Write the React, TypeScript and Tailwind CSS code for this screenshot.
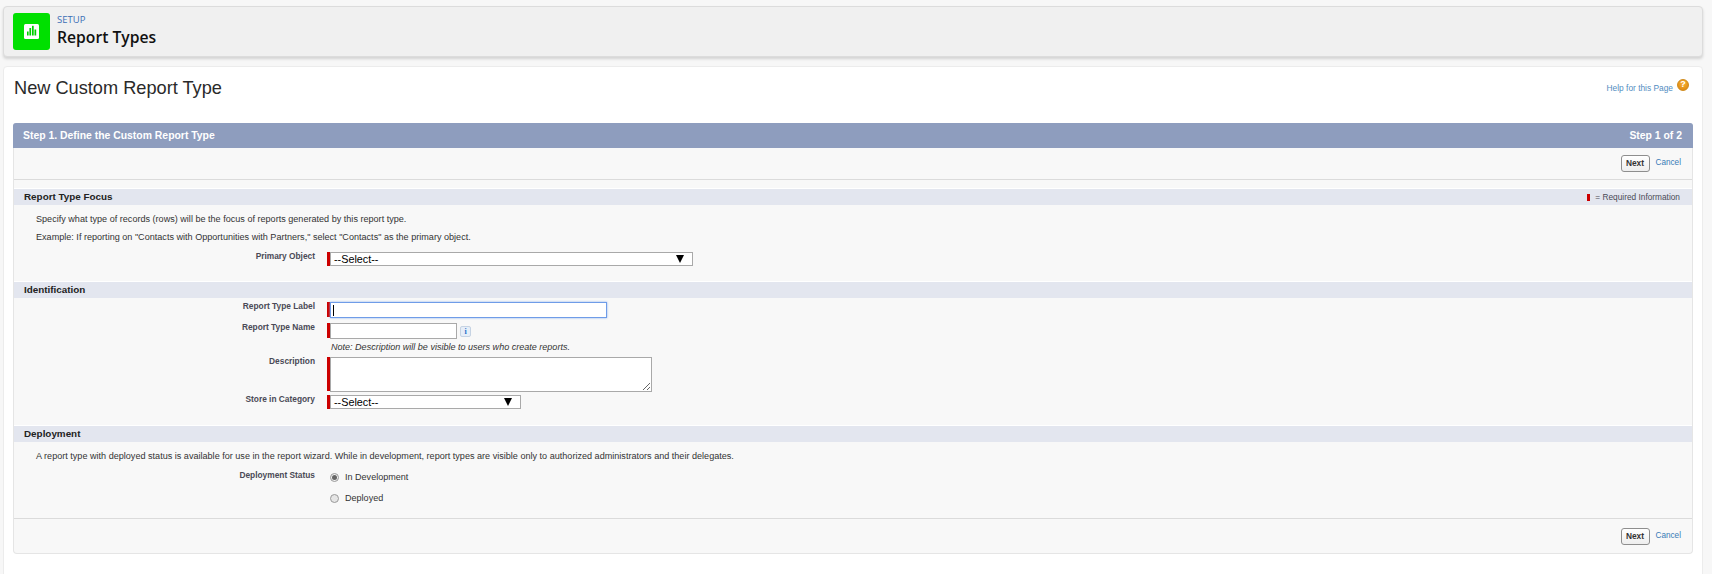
import { ReactNode } from 'react';

function SectionHeader({ title, children }: { title: string; children?: ReactNode }) {
  return (
    <div className="h-[17px] bg-[#e3e6ef] border-t border-white flex items-center justify-between pl-[10px] pr-[12px] text-[#222] text-[9.87px] font-bold">
      <span>{title}</span>
      {children}
    </div>
  );
}

function FieldRow({ label, className, children }: { label: string; className?: string; children: ReactNode }) {
  return (
    <div className={`flex ${className ?? ''}`}>
      <div className="w-[301px] text-right text-[#4a4a56] text-[8.35px] font-bold leading-[9px] shrink-0">{label}</div>
      <div className="ml-[12px] flex items-start">{children}</div>
    </div>
  );
}

function RequiredBar({ className }: { className: string }) {
  return <div className={`w-[3px] bg-[#c00] shrink-0 ${className}`} />;
}

function SelectBox({ width }: { width: string }) {
  return (
    <div className="flex">
      <RequiredBar className="h-[14px]" />
      <div className={`${width} h-[14px] bg-white border border-[#a9a9a9] flex items-center justify-between pl-[3px] pr-[8px] text-[10.8px] text-black`}>
        <span>--Select--</span>
        <svg width="8" height="8" viewBox="0 0 8 8"><path d="M0 0 H8 L4 8 Z" fill="#000" /></svg>
      </div>
    </div>
  );
}

function ButtonRow({ className }: { className: string }) {
  return (
    <div className={`flex items-center justify-end pr-[11px] ${className}`}>
      <button className="w-[29px] h-[17px] bg-gradient-to-b from-white to-[#eee] border border-[#8e8e8e] rounded-[3px] text-[#333] text-[8.35px] font-bold flex items-center justify-center">Next</button>
      <a className="ml-[6px] text-[#015ba7] opacity-80 text-[8.2px]">Cancel</a>
    </div>
  );
}

export default function App() {
  return (
    <div className="h-[574px] overflow-hidden bg-[#f7f7f7] pt-[6px] px-[3px] pr-[9px] font-['Liberation_Sans',Arial,sans-serif]">
      <div className="h-[51px] bg-[#f0f0f0] border border-[#dcdcdc] rounded-[4px] shadow-[0_2px_3px_rgba(0,0,0,0.15)] flex items-center pl-[9px]">
        <div className="w-[37px] h-[37px] bg-[#00e000] rounded-[3px] flex items-center justify-center">
          <svg width="15" height="15" viewBox="0 0 15 15">
            <rect width="15" height="15" rx="1.5" fill="#fff" />
            <rect x="3" y="7.5" width="1.6" height="4" fill="#00d000" />
            <rect x="5.4" y="4" width="1.7" height="7.5" fill="#00d000" />
            <rect x="8" y="1.8" width="1.7" height="9.7" fill="#00d000" />
            <rect x="10.5" y="5.5" width="1.7" height="6" fill="#00d000" />
          </svg>
        </div>
        <div className="ml-[7px] -mt-[2px]">
          <div className="text-[#3b6fb6] text-[9.5px] leading-[12px] font-['Open_Sans',sans-serif]">SETUP</div>
          <div className="text-[#111] text-[15.7px] leading-[22px] font-semibold font-['Open_Sans',sans-serif]">Report Types</div>
        </div>
      </div>

      <div className="mt-[9px] h-[521px] bg-white border border-[#ececec] rounded-t-[4px] px-[9px]">
        <div className="h-[56px] flex justify-between">
          <h1 className="mt-[9px] ml-[1px] text-[#2a2a2a] text-[18.2px] leading-[24px]">New Custom Report Type</h1>
          <div className="mt-[12px] mr-[4px] flex items-start">
            <a className="mt-[3px] text-[#015ba7] opacity-70 text-[8.37px] leading-[12px]">Help for this Page</a>
            <div className="ml-[4px] w-[12px] h-[12px] rounded-full bg-[radial-gradient(circle_at_50%_35%,#f9b233,#d9800a)] border border-[#cf8a1a] text-white text-[9px] font-bold flex items-center justify-center">?</div>
          </div>
        </div>

        <div className="h-[431px] bg-[#f8f8f8] border-x border-b border-[#e5e5e5] rounded-[4px]">
          <div className="h-[25px] -mx-[1px] bg-[#8e9dbe] rounded-t-[3px] flex items-center justify-between pl-[10px] pr-[11px] text-white text-[10.42px] font-bold">
            <span>Step 1. Define the Custom Report Type</span>
            <span>Step 1 of 2</span>
          </div>
          <ButtonRow className="h-[32px] border-b border-[#dbdbdb]" />

          <div className="mt-[8px]">
            <SectionHeader title="Report Type Focus">
              <span className="flex items-center text-[#4a4a56] font-normal text-[8.3px]">
                <span className="w-[3px] h-[7px] bg-[#c00] mr-[5px]" />= Required Information
              </span>
            </SectionHeader>
            <div className="h-[76px] text-[#333] text-[9.09px]">
              <p className="pl-[22px] pt-[8px] leading-[12px]">Specify what type of records (rows) will be the focus of reports generated by this report type.</p>
              <p className="pl-[22px] mt-[6px] leading-[12px]">Example: If reporting on "Contacts with Opportunities with Partners," select "Contacts" as the primary object.</p>
              <FieldRow label="Primary Object" className="mt-[9px]">
                <SelectBox width="w-[363px]" />
              </FieldRow>
            </div>

            <SectionHeader title="Identification" />
            <div className="h-[123px]">
              <FieldRow label="Report Type Label" className="mt-[4px]">
                <RequiredBar className="h-[15px]" />
                <div className="w-[277px] h-[16px] bg-white border border-[#6f9ce8] shadow-[0_0_2px_#8ab0f0] flex items-center pl-[2px]">
                  <div className="w-[1px] h-[11px] bg-black" />
                </div>
              </FieldRow>
              <FieldRow label="Report Type Name" className="mt-[5px]">
                <RequiredBar className="h-[15px]" />
                <input className="w-[127px] h-[16px] bg-white border border-[#a9a9a9]" />
                <div className="ml-[3px] mt-[3px] w-[11px] h-[11px] bg-[#e6eef8] border border-[#c6d3e3] rounded-[2px] text-[#2a6fc9] text-[8px] font-bold font-['Liberation_Serif',serif] flex items-center justify-center">i</div>
              </FieldRow>
              <div className="ml-[317px] mt-[2px] text-[#333] text-[9.04px] italic leading-[12px]">Note: Description will be visible to users who create reports.</div>
              <FieldRow label="Description" className="mt-[4px]">
                <RequiredBar className="h-[34px]" />
                <textarea className="w-[322px] h-[35px] bg-white border border-[#a9a9a9]" />
              </FieldRow>
              <FieldRow label="Store in Category" className="mt-[3px]">
                <SelectBox width="w-[191px]" />
              </FieldRow>
            </div>

            <SectionHeader title="Deployment" />
            <div className="h-[77px] border-b border-[#dbdbdb] text-[#333]">
              <p className="pl-[22px] pt-[8px] text-[9.09px] leading-[12px]">A report type with deployed status is available for use in the report wizard. While in development, report types are visible only to authorized administrators and their delegates.</p>
              <FieldRow label="Deployment Status" className="mt-[9px]">
                <div className="flex flex-col gap-[11px] pl-[3px] pt-[1px] text-[9.05px] leading-[10px]">
                  <label className="flex items-center">
                    <span className="w-[9px] h-[9px] rounded-full border border-[#999] bg-[#f2f2f2] flex items-center justify-center">
                      <span className="w-[5px] h-[5px] rounded-full bg-[#666]" />
                    </span>
                    <span className="ml-[6px]">In Development</span>
                  </label>
                  <label className="flex items-center">
                    <span className="w-[9px] h-[9px] rounded-full border border-[#999] bg-[#e5e5e5]" />
                    <span className="ml-[6px]">Deployed</span>
                  </label>
                </div>
              </FieldRow>
            </div>
            <ButtonRow className="h-[35px]" />
          </div>
        </div>
      </div>
    </div>
  );
}
